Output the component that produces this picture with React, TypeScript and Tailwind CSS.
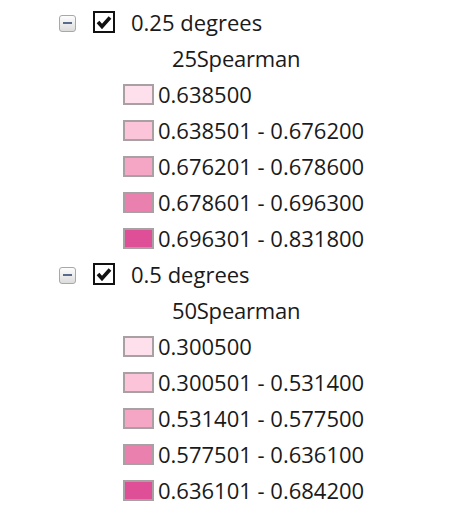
import React from "react";

const groups = [
  {
    title: "0.25 degrees",
    field: "25Spearman",
    items: ["0.638500", "0.638501 - 0.676200", "0.676201 - 0.678600", "0.678601 - 0.696300", "0.696301 - 0.831800"],
  },
  {
    title: "0.5 degrees",
    field: "50Spearman",
    items: ["0.300500", "0.300501 - 0.531400", "0.531401 - 0.577500", "0.577501 - 0.636100", "0.636101 - 0.684200"],
  },
];

const swatchClasses = [
  "bg-[#fde0ec]",
  "bg-[#fbc4d9]",
  "bg-[#f4a6c4]",
  "bg-[#ea80ad]",
  "bg-[#df4f98]",
];

function MinusBox() {
  return (
    <div className="w-[17px] h-[17px] rounded-[3px] border border-[#a8a8a8] bg-gradient-to-b from-[#fdfdfd] to-[#dcdcdc] flex items-center justify-center">
      <div className="w-[9px] h-[2px] bg-[#5a6a8c]" />
    </div>
  );
}

function CheckBox() {
  return (
    <div className="w-[22px] h-[22px] border-2 border-[#111] bg-white flex items-center justify-center">
      <svg width="16" height="14" viewBox="0 0 16 14">
        <path d="M2 7 L6 11.5 L14 2.5" fill="none" stroke="#111" strokeWidth="3.6" strokeLinejoin="miter" />
      </svg>
    </div>
  );
}

export default function App() {
  return (
    <div
      className="w-[474px] h-[511px] bg-white pt-[4px] text-[22px] text-[#1a1a1a]"
      style={{ fontFamily: '"Open Sans", "Noto Sans", sans-serif' }}
    >
      {groups.map((g) => (
        <div key={g.title}>
          <div className="h-[36px] flex items-center">
            <div className="ml-[59px] mt-[2px]">
              <MinusBox />
            </div>
            <div className="ml-[17px]">
              <CheckBox />
            </div>
            <span className="ml-[16px] leading-none">{g.title}</span>
          </div>
          <div className="h-[36px] flex items-center">
            <span className="ml-[172px] leading-none tracking-[-0.2px]">{g.field}</span>
          </div>
          {g.items.map((it, i) => (
            <div key={it} className="h-[36px] flex items-center">
              <div className={`ml-[123px] w-[31px] h-[21px] border-2 border-[#a9a0a4] ${swatchClasses[i]}`} />
              <span className="ml-[4px] leading-none">{it}</span>
            </div>
          ))}
        </div>
      ))}
    </div>
  );
}
